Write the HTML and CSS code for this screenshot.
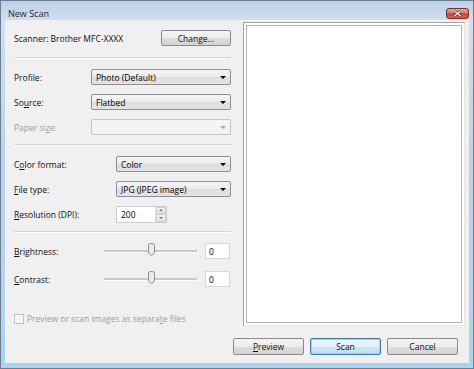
FILE: index.html
```html
<!DOCTYPE html>
<html lang="en">
<head>
    <meta charset="UTF-8">
    <title>New Scan</title>
    <link rel="stylesheet" href="styles.css">
</head>
<body>
    <div class="window">
        <div class="titlebar">
            <span class="title">New Scan</span>
            <button class="close" aria-label="Close">
                <svg width="9" height="7" viewBox="0 0 9 7">
                    <path d="M1.5 1 L7.5 6 M7.5 1 L1.5 6" stroke="#6b1e14" stroke-width="2.6"/>
                    <path d="M1.5 1 L7.5 6 M7.5 1 L1.5 6" stroke="#fff" stroke-width="1.4"/>
                </svg>
            </button>
        </div>
        <div class="client">
            <div class="main">
                <div class="settings">
                    <div class="row scanner-row">
                        <span>Scanner: Brother MFC-XXXX</span>
                        <button class="btn btn-change">Chan<u>g</u>e...</button>
                    </div>
                    <div class="sep sep-first"></div>

                    <div class="row">
                        <span class="lbl">Prof<u>i</u>le:</span>
                        <div class="combo">Photo (Default)<span class="arrow"></span></div>
                    </div>
                    <div class="row">
                        <span class="lbl">So<u>u</u>rce:</span>
                        <div class="combo">Flatbed<span class="arrow"></span></div>
                    </div>
                    <div class="row">
                        <span class="lbl disabled">Paper si<u>z</u>e:</span>
                        <div class="combo combo-disabled"><span class="arrow"></span></div>
                    </div>
                    <div class="sep"></div>

                    <div class="row">
                        <span class="lbl lbl-wide">C<u>o</u>lor format:</span>
                        <div class="combo">Color<span class="arrow"></span></div>
                    </div>
                    <div class="row">
                        <span class="lbl lbl-wide"><u>F</u>ile type:</span>
                        <div class="combo">JPG (JPEG image)<span class="arrow"></span></div>
                    </div>
                    <div class="row">
                        <span class="lbl lbl-wide"><u>R</u>esolution (DPI):</span>
                        <div class="spin">
                            <span class="spin-value">200</span>
                            <span class="spin-btns">
                                <span class="spin-btn"><i class="up"></i></span>
                                <span class="spin-btn"><i class="down"></i></span>
                            </span>
                        </div>
                    </div>
                    <div class="sep sep-sliders"></div>

                    <div class="row slider-row">
                        <span class="lbl lbl-slider"><u>B</u>rightness:</span>
                        <div class="track">
                            <svg class="thumb" width="7" height="13" viewBox="0 0 7 13">
                                <path d="M0.5 2.5 Q0.5 0.5 2.5 0.5 L4.5 0.5 Q6.5 0.5 6.5 2.5 L6.5 10 L3.5 12.5 L0.5 10 Z" fill="#ececec" stroke="#8b8b8b"/>
                            </svg>
                        </div>
                        <span class="num">0</span>
                    </div>
                    <div class="row slider-row">
                        <span class="lbl lbl-slider"><u>C</u>ontrast:</span>
                        <div class="track">
                            <svg class="thumb" width="7" height="13" viewBox="0 0 7 13">
                                <path d="M0.5 2.5 Q0.5 0.5 2.5 0.5 L4.5 0.5 Q6.5 0.5 6.5 2.5 L6.5 10 L3.5 12.5 L0.5 10 Z" fill="#ececec" stroke="#8b8b8b"/>
                            </svg>
                        </div>
                        <span class="num">0</span>
                    </div>

                    <div class="check-row disabled">
                        <span class="checkbox"></span>
                        <span>Preview or scan images as separa<u>t</u>e files</span>
                    </div>
                </div>
                <div class="preview">
                    <div class="preview-inner"></div>
                </div>
            </div>
            <div class="actions">
                <button class="btn"><u>P</u>review</button>
                <button class="btn btn-default">Scan</button>
                <button class="btn">Cancel</button>
            </div>
        </div>
    </div>
</body>
</html>
```

FILE: styles.css
```css
body {
    margin: 0;
    font-family: "Open Sans", "Noto Sans", sans-serif;
    font-size: 8.5px;
    color: #111;
}
.window {
    width: 474px;
    height: 369px;
    box-sizing: border-box;
    border: 1px solid #6d7d90;
    background: linear-gradient(to bottom, #bcd0e6 0px, #d2dfee 20px, #bdd3eb 40%, #b2d3ee 80%, #a5d5f2 100%);
    display: flex;
    flex-direction: column;
}
.titlebar {
    height: 19px;
    display: flex;
    align-items: flex-start;
    padding: 0 4px 0 7px;
}
.title {
    padding-top: 6px;
    font-size: 9px;
    color: #1e2b3a;
}
.close {
    margin-left: auto;
    margin-top: 7px;
    width: 23px;
    height: 11px;
    padding: 0;
    border: 1px solid #7a3025;
    border-radius: 3px;
    background: linear-gradient(to bottom, #e6a79b 0%, #d67868 45%, #c2432f 55%, #d4624c 100%);
    display: flex;
    align-items: center;
    justify-content: center;
}
.client {
    margin: 0 4px;
    height: 343px;
    background: #f0f0f0;
    display: flex;
    flex-direction: column;
}
.main {
    display: flex;
    height: 306px;
}
.settings {
    width: 217px;
    padding: 10px 0 0 9px;
    display: flex;
    flex-direction: column;
}
.row {
    display: flex;
    align-items: center;
    height: 16px;
    margin-bottom: 9px;
}
.scanner-row {
    justify-content: space-between;
    margin-bottom: 0;
}
.lbl {
    width: 77px;
    flex-shrink: 0;
}
.lbl-wide {
    width: 102px;
}
.lbl-slider {
    width: 90px;
}
.disabled {
    color: #9d9d9d;
}
.sep {
    height: 1px;
    background: #d2d2d2;
    border-bottom: 1px solid #fff;
    margin: 0 0 10px;
}
.sep-first {
    margin-top: 11px;
}
.sep-sliders {
    margin-top: 0;
}
.combo {
    flex: 1;
    height: 16px;
    box-sizing: border-box;
    border: 1px solid #8e8f8f;
    border-radius: 2px;
    background: linear-gradient(to bottom, #f6f6f6 0%, #ebebeb 50%, #dddddd 51%, #e4e4e4 100%);
    padding-left: 4px;
    display: flex;
    align-items: center;
    color: #000;
}
.combo-disabled {
    border-color: #c5c5c5;
    background: #f4f4f4;
}
.arrow {
    margin-left: auto;
    margin-right: 4px;
    border-left: 3px solid transparent;
    border-right: 3px solid transparent;
    border-top: 3px solid #000;
}
.combo-disabled .arrow {
    border-top-color: #a6a6a6;
}
.spin {
    display: flex;
    height: 17px;
    box-sizing: border-box;
    border: 1px solid #c9ced6;
    background: #fff;
}
.spin-value {
    width: 34px;
    padding-left: 4px;
    display: flex;
    align-items: center;
    color: #000;
}
.spin-btns {
    width: 10px;
    display: flex;
    flex-direction: column;
    background: #f0f0f0;
    border-left: 1px solid #e0e0e0;
}
.spin-btn {
    flex: 1;
    display: flex;
    align-items: center;
    justify-content: center;
    background: linear-gradient(to bottom, #f4f4f4, #e2e2e2);
    border: 1px solid #d0d0d0;
    border-radius: 1px;
}
.spin-btn i {
    border-left: 2px solid transparent;
    border-right: 2px solid transparent;
}
.spin-btn .up {
    border-bottom: 2px solid #6f7d8c;
}
.spin-btn .down {
    border-top: 2px solid #6f7d8c;
}
.slider-row {
    margin-bottom: 12px;
}
.track {
    position: relative;
    width: 93px;
    height: 2px;
    background: #c9c9c9;
    border-bottom: 1px solid #fff;
}
.thumb {
    position: absolute;
    left: 44px;
    top: -7px;
}
.num {
    margin-left: 8px;
    width: 25px;
    height: 16px;
    box-sizing: border-box;
    border: 1px solid #d4d7dc;
    background: #fff;
    padding-left: 3px;
    display: flex;
    align-items: center;
    color: #000;
}
.check-row {
    display: flex;
    align-items: center;
    margin-top: 14px;
    gap: 3px;
}
.checkbox {
    width: 8px;
    height: 8px;
    border: 1px solid #c2c2c2;
    background: #f6f6f6;
}
.preview {
    margin: 2px 4px 0 12px;
    flex: 1;
    height: 304px;
    box-sizing: border-box;
    border: 1px solid #a3a3a3;
    border-right-color: #e6e6e6;
    border-bottom-color: #e6e6e6;
    background: #fff;
    padding: 2px;
}
.preview-inner {
    height: 100%;
    box-sizing: border-box;
    border: 1px solid #b4b4b4;
}
.actions {
    display: flex;
    justify-content: flex-end;
    gap: 6px;
    padding: 12px 11px 0 0;
}
.btn {
    width: 71px;
    height: 17px;
    padding: 0;
    font: inherit;
    color: #111;
    border: 1px solid #8a8a8a;
    border-radius: 2px;
    background: linear-gradient(to bottom, #f4f4f4 0%, #ececec 50%, #dedede 51%, #d3d3d3 100%);
}
.btn-change {
    width: 70px;
    height: 16px;
}
.btn-default {
    border-color: #3d7bad;
    box-shadow: inset 0 0 0 1px #9fd4f1;
    background: linear-gradient(to bottom, #eef6fb 0%, #e3f0f9 50%, #cbe5f6 51%, #c0def2 100%);
}
u {
    text-underline-offset: 1px;
}
```
